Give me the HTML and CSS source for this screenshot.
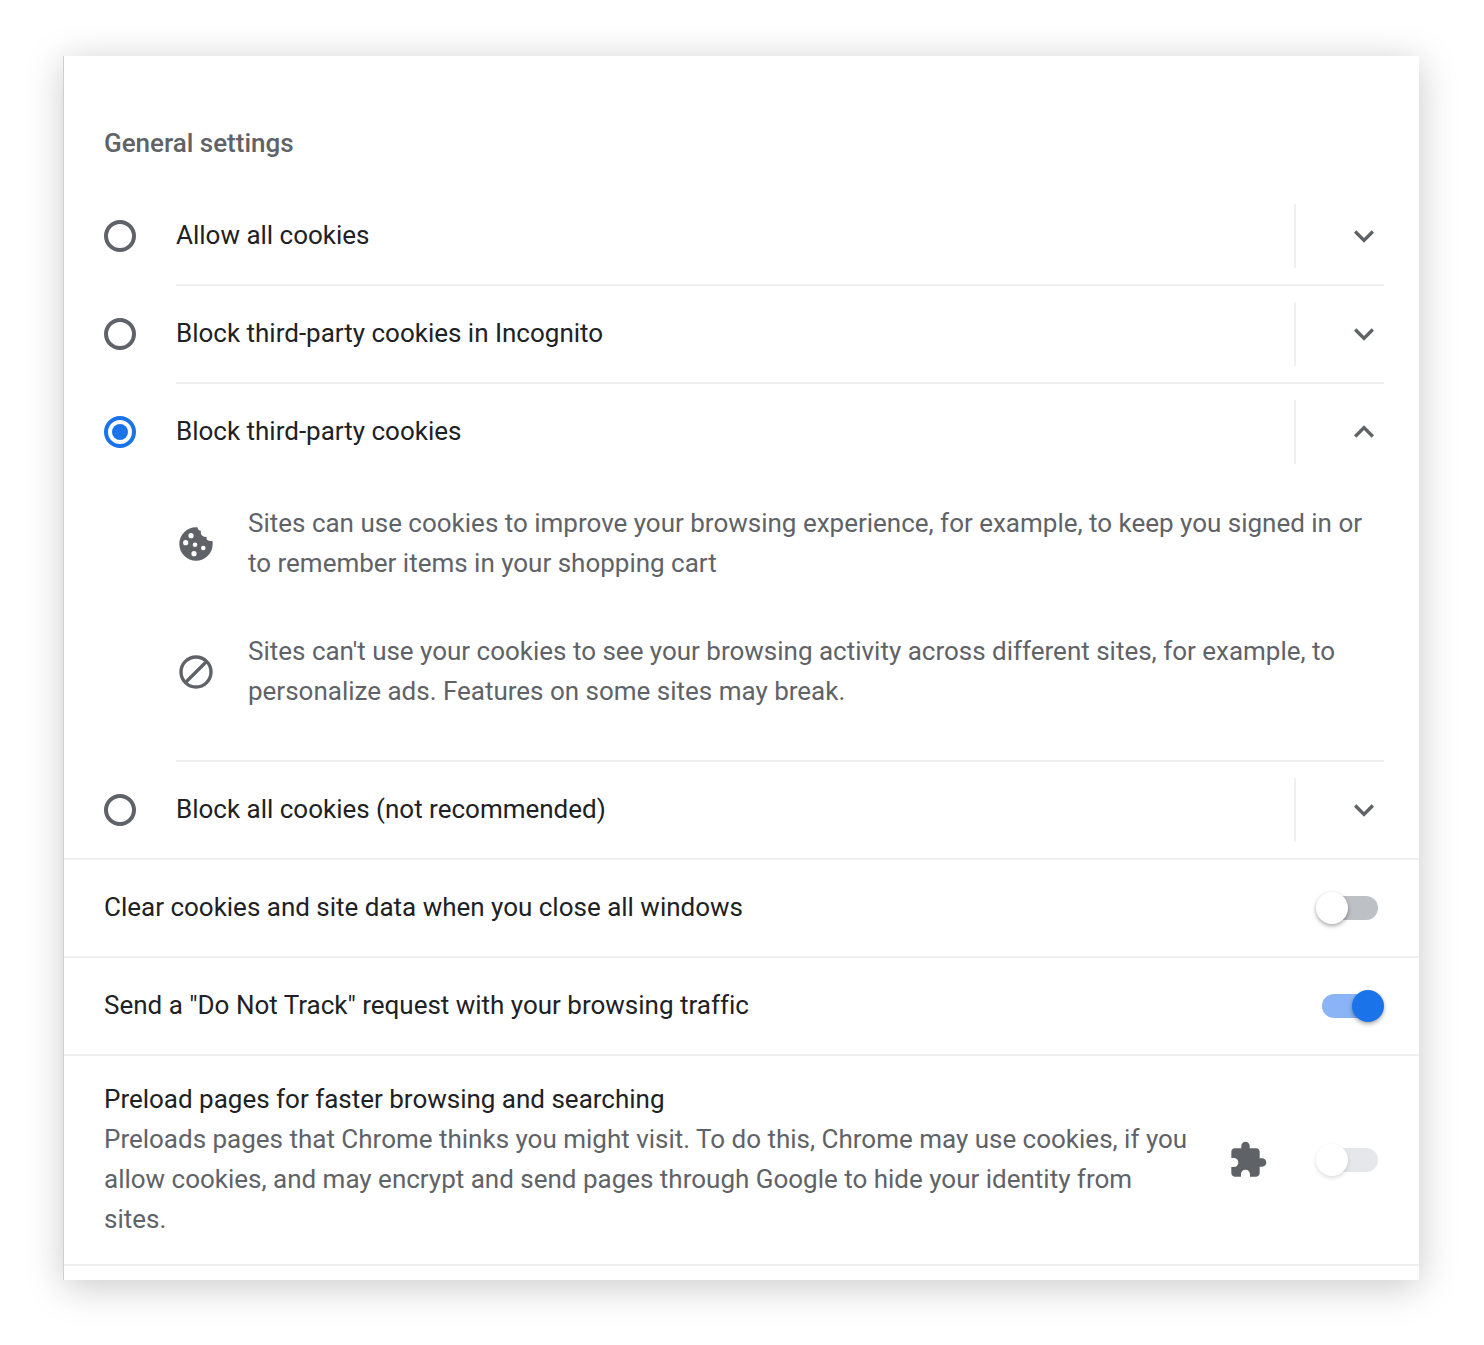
FILE: index.html
```html
<!DOCTYPE html>
<html lang="en">
<head>
<meta charset="utf-8">
<title>General settings</title>
<link rel="stylesheet" href="styles.css">
</head>
<body>
<main class="card">
  <h2 class="heading">General settings</h2>
  <div class="radio-group">
    <div class="option">
      <span class="radio"></span>
      <div class="option-body">
        <div class="option-row">
          <span class="label">Allow all cookies</span>
          <span class="expand"><svg class="icon" viewBox="0 0 24 24"><path d="M16.59 8.59L12 13.17 7.41 8.59 6 10l6 6 6-6z"/></svg></span>
        </div>
      </div>
    </div>
    <div class="option">
      <span class="radio"></span>
      <div class="option-body">
        <div class="option-row">
          <span class="label">Block third-party cookies in Incognito</span>
          <span class="expand"><svg class="icon" viewBox="0 0 24 24"><path d="M16.59 8.59L12 13.17 7.41 8.59 6 10l6 6 6-6z"/></svg></span>
        </div>
      </div>
    </div>
    <div class="option">
      <span class="radio radio-on"></span>
      <div class="option-body">
        <div class="option-row">
          <span class="label">Block third-party cookies</span>
          <span class="expand"><svg class="icon" viewBox="0 0 24 24"><path d="M12 8l-6 6 1.41 1.41L12 10.83l4.59 4.58L18 14z"/></svg></span>
        </div>
        <div class="details">
          <div class="detail">
            <svg class="icon detail-icon" viewBox="0 0 40 40"><path fill-rule="evenodd" d="M20 3.3A16.7 16.7 0 1 0 36.7 20c0-1.2-.1-2.300-.4-3.300-1.300.6-3.400.6-4.700-.4-.9-.7-1.300-2.300-1-3.500-2 .5-4.300-.4-5.300-2.300-.6-1.100-.6-2.400-.3-3.500-2-.3-3.500-1.800-3.500-3.700z"/><g class="crumbs"><circle cx="15" cy="11.700" r="2.600"/><circle cx="9.700" cy="18.700" r="2.600"/><circle cx="19" cy="20.700" r="2.300"/><circle cx="27.300" cy="24" r="2.300"/><circle cx="18" cy="29.700" r="2.600"/></g></svg>
            <p class="detail-text">Sites can use cookies to improve your browsing experience, for example, to keep you signed in or to remember items in your shopping cart</p>
          </div>
          <div class="detail">
            <svg class="icon detail-icon" viewBox="0 0 40 40"><g class="ban"><circle cx="20" cy="20" r="15"/><line x1="9.500" y1="30.500" x2="30.500" y2="9.500"/></g></svg>
            <p class="detail-text">Sites can't use your cookies to see your browsing activity across different sites, for example, to personalize ads. Features on some sites may break.</p>
          </div>
        </div>
      </div>
    </div>
    <div class="option">
      <span class="radio"></span>
      <div class="option-body">
        <div class="option-row">
          <span class="label">Block all cookies (not recommended)</span>
          <span class="expand"><svg class="icon" viewBox="0 0 24 24"><path d="M16.59 8.59L12 13.17 7.41 8.59 6 10l6 6 6-6z"/></svg></span>
        </div>
      </div>
    </div>
  </div>

  <div class="setting">
    <span class="label">Clear cookies and site data when you close all windows</span>
    <span class="toggle"><span class="track"></span><span class="knob"></span></span>
  </div>
  <div class="setting">
    <span class="label">Send a "Do Not Track" request with your browsing traffic</span>
    <span class="toggle toggle-on"><span class="track"></span><span class="knob"></span></span>
  </div>
  <div class="setting setting-tall">
    <div class="setting-text">
      <div class="title">Preload pages for faster browsing and searching</div>
      <div class="sublabel">Preloads pages that Chrome thinks you might visit. To do this, Chrome may use cookies, if you allow cookies, and may encrypt and send pages through Google to hide your identity from sites.</div>
    </div>
    <svg class="icon puzzle" viewBox="0 0 24 24"><path d="M20.500 11H19V7c0-1.100-.9-2-2-2h-4V3.500C13 2.120 11.880 1 10.500 1S8 2.120 8 3.500V5H4c-1.100 0-1.990.9-1.990 2v3.800H3.500c1.490 0 2.700 1.210 2.700 2.700s-1.210 2.700-2.700 2.700H2V20c0 1.100.9 2 2 2h3.800v-1.500c0-1.490 1.210-2.700 2.700-2.700 1.490 0 2.700 1.210 2.700 2.700V22H17c1.100 0 2-.9 2-2v-4h1.500c1.380 0 2.500-1.120 2.500-2.500S21.880 11 20.500 11z"/></svg>
    <span class="toggle toggle-disabled"><span class="track"></span><span class="knob"></span></span>
  </div>
</main>
</body>
</html>
```
FILE: styles.css
```css
* { box-sizing: border-box; }
html, body { margin: 0; background: #fff; }
body {
  height: 1345px;
  padding: 56px 65px 0 64px;
  font-family: Roboto, "Liberation Sans", sans-serif;
  font-size: 26px;
  line-height: 40px;
  letter-spacing: -.007px;
  color: #202124;
  overflow: hidden;
}
.card {
  height: 1224px;
  background: #fff;
  overflow: hidden;
  box-shadow: -1px 0 0 #cfcfcf, 0 6px 36px rgba(0, 0, 0, .22);
}
.heading {
  margin: 0;
  padding: 67px 40px 25px;
  font-size: 26px;
  font-weight: 500;
  line-height: 40px;
  color: #5f6368;
}
.radio-group { padding: 0 35px 0 40px; }
.option { display: flex; align-items: flex-start; }
.radio {
  flex: none;
  width: 32px;
  height: 32px;
  margin: 32px 40px 0 0;
  border: 4px solid #5f6368;
  border-radius: 50%;
}
.radio-on {
  border-color: #1a73e8;
  display: flex;
  align-items: center;
  justify-content: center;
}
.radio-on::before {
  content: "";
  width: 16px;
  height: 16px;
  border-radius: 50%;
  background: #1a73e8;
}
.option-body { flex: 1; border-bottom: 2px solid #f0f0f1; }
.option:last-child .option-body { border-bottom: 0; }
.option-row { display: flex; align-items: center; justify-content: space-between; height: 96px; }
.label { padding-bottom: 2px; }
.expand {
  display: flex;
  align-items: center;
  justify-content: flex-end;
  width: 90px;
  height: 64px;
  border-left: 2px solid #f0f0f1;
}
.icon { display: block; width: 40px; height: 40px; fill: #5f6368; flex: none; }
.details { padding: 23px 0 49px; display: flex; flex-direction: column; gap: 48px; }
.detail { display: flex; align-items: center; gap: 32px; color: #5f6368; }
.detail-icon { margin-top: 2px; }
.detail-text { margin: 0; flex: 1; }
.crumbs circle { fill: #fff; }
.ban { fill: none; stroke: #5f6368; stroke-width: 3.4; }
.setting {
  display: flex;
  align-items: center;
  height: 98px;
  padding: 0 35px 0 40px;
  border-top: 2px solid #f0f0f1;
  justify-content: space-between;
}
.setting-tall {
  height: auto;
  padding-top: 23px;
  padding-bottom: 25px;
  border-bottom: 2px solid #f0f0f1;
  justify-content: flex-start;
}
.setting-text { width: 1096px; }
.sublabel { color: #5f6368; }
.puzzle { margin: 2px 0 0 28px; }
.toggle { position: relative; display: block; flex: none; width: 68px; height: 32px; margin-left: auto; }
.toggle-disabled { margin-top: 2px; }
.track {
  position: absolute;
  left: 6px;
  top: 4px;
  width: 56px;
  height: 24px;
  border-radius: 12px;
  background: #bdc1c6;
}
.knob {
  position: absolute;
  left: 0;
  top: 0;
  width: 32px;
  height: 32px;
  border-radius: 50%;
  background: #fff;
  box-shadow: 0 2px 4px rgba(0, 0, 0, .35);
}
.toggle-on .track { background: #8ab4f5; }
.toggle-on .knob { left: 36px; background: #1a73e8; }
.toggle-disabled .track { background: #e6e7ea; }
.toggle-disabled .knob { box-shadow: 0 2px 4px rgba(0, 0, 0, .14); }
```
